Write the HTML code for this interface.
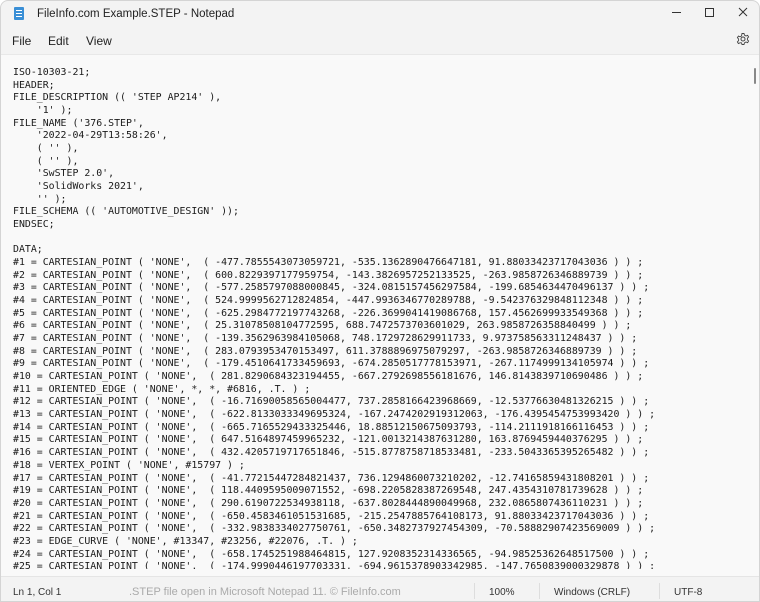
<!DOCTYPE html>
<html><head><meta charset="utf-8"><style>
*{margin:0;padding:0;box-sizing:border-box}
body{width:760px;height:602px;background:#fff;overflow:hidden;font-family:"Liberation Sans",sans-serif;position:relative}
.win{position:absolute;left:0;top:0;width:760px;height:602px;background:#f3f3f3;border:1px solid #d4d4d4;border-radius:8px 8px 0 0;overflow:hidden}
.title{position:absolute;left:36px;top:7px;font-size:11.5px;color:#222}
.icon{position:absolute;left:13px;top:6px;width:10px;height:13px;background:#3a8fd6;border-radius:1px}
.icon i{position:absolute;left:2px;width:6px;height:1px;background:#fff}
.menu{position:absolute;top:33px;font-size:12px;color:#222}
.editor{position:absolute;left:0;top:53px;width:760px;height:522px;background:#f9f9f9;border-top:1px solid #e8e8e8}
.clip{position:absolute;left:0;top:0;width:750px;height:514px;overflow:hidden}
pre{position:absolute;left:12px;top:12px;font-family:"DejaVu Sans Mono","Liberation Mono",monospace;font-size:9.9px;line-height:12.67px;color:#1a1a1a;white-space:pre}
.status{position:absolute;left:0;top:575px;width:760px;height:27px;background:#f3f3f3;border-top:1px solid #e5e5e5;font-size:10px;color:#333}
.status span{position:absolute;top:10px}
.sep{position:absolute;top:6px;width:1px;height:16px;background:#ddd}
</style></head><body><div class="win">
<div class="icon"><i style="top:3px"></i><i style="top:6px"></i><i style="top:9px"></i></div>
<div class="title">FileInfo.com Example.STEP - Notepad</div>
<svg style="position:absolute;left:660px;top:4px" width="100" height="16"><path d="M11 7.5h9" stroke="#333" fill="none"/><rect x="44.5" y="3.5" width="8" height="8" stroke="#333" fill="none"/><path d="M78 3l8 8M86 3l-8 8" stroke="#333" fill="none"/></svg>
<div class="menu" style="left:11px">File</div><div class="menu" style="left:47px">Edit</div><div class="menu" style="left:85px">View</div>
<svg style="position:absolute;left:735px;top:31px" width="14" height="14" viewBox="0 0 14 14"><circle cx="7" cy="7" r="2" fill="none" stroke="#444"/><path d="M6 1.5h2l.5 1.7 1.5.8 1.6-.7 1 1.6-1.2 1.3v1.6l1.2 1.3-1 1.6-1.6-.7-1.5.8-.5 1.7H6l-.5-1.7L4 10.8l-1.6.7-1-1.6 1.2-1.3V7l-1.2-1.3 1-1.6L4 4.8 5.5 4z" fill="none" stroke="#444" stroke-width=".9"/></svg>
<div class="editor">
<div style="position:absolute;left:753px;top:13px;width:2px;height:16px;background:#888;border-radius:1px"></div>
<div class="clip"><pre>ISO-10303-21;
HEADER;
FILE_DESCRIPTION (( 'STEP AP214' ),
    '1' );
FILE_NAME ('376.STEP',
    '2022-04-29T13:58:26',
    ( '' ),
    ( '' ),
    'SwSTEP 2.0',
    'SolidWorks 2021',
    '' );
FILE_SCHEMA (( 'AUTOMOTIVE_DESIGN' ));
ENDSEC;

DATA;
#1 = CARTESIAN_POINT ( 'NONE',  ( -477.7855543073059721, -535.1362890476647181, 91.88033423717043036 ) ) ;
#2 = CARTESIAN_POINT ( 'NONE',  ( 600.8229397177959754, -143.3826957252133525, -263.9858726346889739 ) ) ;
#3 = CARTESIAN_POINT ( 'NONE',  ( -577.2585797088000845, -324.0815157456297584, -199.6854634470496137 ) ) ;
#4 = CARTESIAN_POINT ( 'NONE',  ( 524.9999562712824854, -447.9936346770289788, -9.542376329848112348 ) ) ;
#5 = CARTESIAN_POINT ( 'NONE',  ( -625.2984772197743268, -226.3699041419086768, 157.4562699933549368 ) ) ;
#6 = CARTESIAN_POINT ( 'NONE',  ( 25.31078508104772595, 688.7472573703601029, 263.9858726358840499 ) ) ;
#7 = CARTESIAN_POINT ( 'NONE',  ( -139.3562963984105068, 748.1729728629911733, 9.973758563311248437 ) ) ;
#8 = CARTESIAN_POINT ( 'NONE',  ( 283.0793953470153497, 611.3788896975079297, -263.9858726346889739 ) ) ;
#9 = CARTESIAN_POINT ( 'NONE',  ( -179.4510641733459693, -674.2850517778153971, -267.1174999134105974 ) ) ;
#10 = CARTESIAN_POINT ( 'NONE',  ( 281.8290684323194455, -667.2792698556181676, 146.8143839710690486 ) ) ;
#11 = ORIENTED_EDGE ( 'NONE', *, *, #6816, .T. ) ;
#12 = CARTESIAN_POINT ( 'NONE',  ( -16.71690058565004477, 737.2858166423968669, -12.53776630481326215 ) ) ;
#13 = CARTESIAN_POINT ( 'NONE',  ( -622.8133033349695324, -167.2474202919312063, -176.4395454753993420 ) ) ;
#14 = CARTESIAN_POINT ( 'NONE',  ( -665.7165529433325446, 18.88512150675093793, -114.2111918166116453 ) ) ;
#15 = CARTESIAN_POINT ( 'NONE',  ( 647.5164897459965232, -121.0013214387631280, 163.8769459440376295 ) ) ;
#16 = CARTESIAN_POINT ( 'NONE',  ( 432.4205719717651846, -515.8778758718533481, -233.5043365395265482 ) ) ;
#18 = VERTEX_POINT ( 'NONE', #15797 ) ;
#17 = CARTESIAN_POINT ( 'NONE',  ( -41.77215447284821437, 736.1294860073210202, -12.74165859431808201 ) ) ;
#19 = CARTESIAN_POINT ( 'NONE',  ( 118.4409595009071552, -698.2205828387269548, 247.4354310781739628 ) ) ;
#20 = CARTESIAN_POINT ( 'NONE',  ( 290.6190722534938118, -637.8028444890049968, 232.0865807436110231 ) ) ;
#21 = CARTESIAN_POINT ( 'NONE',  ( -650.4583461051531685, -215.2547885764108173, 91.88033423717043036 ) ) ;
#22 = CARTESIAN_POINT ( 'NONE',  ( -332.9838334027750761, -650.3482737927454309, -70.58882907423569009 ) ) ;
#23 = EDGE_CURVE ( 'NONE', #13347, #23256, #22076, .T. ) ;
#24 = CARTESIAN_POINT ( 'NONE',  ( -658.1745251988464815, 127.9208352314336565, -94.98525362648517500 ) ) ;
#25 = CARTESIAN_POINT ( 'NONE',  ( -174.9990446197703331, -694.9615378903342985, -147.7650839000329878 ) ) ;</pre></div>
</div>
<div class="status">
<span style="left:12px">Ln 1, Col 1</span>
<span style="left:128px;color:#aaa;font-size:11px;top:9px">.STEP file open in Microsoft Notepad 11. © FileInfo.com</span>
<div class="sep" style="left:473px"></div><span style="left:488px">100%</span>
<div class="sep" style="left:538px"></div><span style="left:553px">Windows (CRLF)</span>
<div class="sep" style="left:658px"></div><span style="left:673px">UTF-8</span>
</div>
</div></body></html>
